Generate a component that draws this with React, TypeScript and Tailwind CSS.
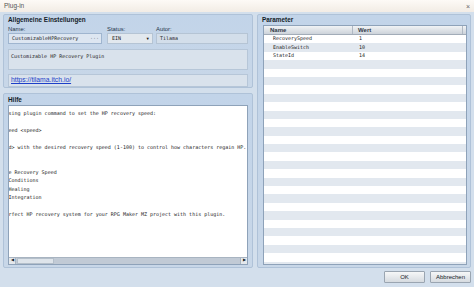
import React from 'react';

const helpLines = [
  'sing plugin command to set the HP recovery speed:',
  '',
  'eed <speed>',
  '',
  'd> with the desired recovery speed (1-100) to control how characters regain HP.',
  '',
  '',
  'e Recovery Speed',
  'Conditions',
  'Healing',
  'Integration',
  '',
  'rfect HP recovery system for your RPG Maker MZ project with this plugin.',
];

const params = [
  { name: 'RecoverySpeed', value: '1' },
  { name: 'EnableSwitch', value: '10' },
  { name: 'StateId', value: '14' },
];

export default function App() {
  const rows = Array.from({ length: 28 }, (_, i) => params[i] ?? { name: '', value: '' });

  return (
    <div className="w-[474px] h-[287px] overflow-hidden flex flex-col bg-[#d3dfec] text-[#141c28] font-['Liberation_Sans',sans-serif]">
      {/* Titelleiste */}
      <div className="h-[12px] flex items-center justify-between px-[4px] bg-gradient-to-b from-[#fdfaf6] to-[#f2ece5] text-[6.5px] text-[#555]">
        <span>Plug-in</span>
        <span className="text-[7px] text-[#666] leading-none">×</span>
      </div>

      <div className="h-[256px] flex gap-[4px] px-[3px] pt-[2px]">
        {/* linke Spalte */}
        <div className="w-[250px] flex flex-col gap-[5px]">
          <div className="h-[74px] flex flex-col px-[4px] rounded-[2px] border border-[#afc2d8] bg-gradient-to-b from-[#c2d4e9] to-[#c8d7e8]">
            <div className="h-[10px] flex items-center text-[6.4px] font-bold">Allgemeine Einstellungen</div>
            <div className="h-[8px] flex items-center text-[5.9px] text-[#26364d]">
              <span className="w-[99px]">Name:</span>
              <span className="w-[49px]">Status:</span>
              <span>Autor:</span>
            </div>
            <div className="h-[11px] flex font-['DejaVu_Sans_Mono',monospace] text-[5px] text-[#1c1c1c]">
              <div className="w-[94px] flex items-center justify-between pl-[3px] pr-[2px] border border-[#9fb5cf] bg-[#dde6f1]">
                <span>CustomizableHPRecovery</span>
                <span className="text-[#667]">···</span>
              </div>
              <div className="w-[46px] ml-[5px] flex items-center justify-between pl-[4px] pr-[3px] border border-[#b5c4d4] bg-[#e2e8ee]">
                <span>EIN</span>
                <span className="text-[4px]">▼</span>
              </div>
              <div className="flex-1 ml-[3px] flex items-center pl-[3px] border border-[#b5c4d4] bg-[#d3deea]">Tilama</div>
            </div>
            <div className="h-[21px] mt-[5px] pl-[2px] pt-[3px] border border-[#b6c6d8] bg-[#d9e2ec] font-['DejaVu_Sans_Mono',monospace] text-[5px] text-[#1c1c1c]">
              Customizable HP Recovery Plugin
            </div>
            <div className="h-[13px] mt-[4px] flex items-center pl-[2px] border border-[#b6c6d8] bg-[#d9e2ec]">
              <span className="text-[6.8px] text-[#1d3fc8] underline">https://tilama.itch.io/</span>
            </div>
          </div>

          <div className="flex-1 flex flex-col px-[4px] pb-[2px] rounded-[2px] border border-[#afc2d8] bg-gradient-to-b from-[#c2d4e9] to-[#c8d7e8]">
            <div className="h-[11px] flex items-center text-[6.4px] font-bold">Hilfe</div>
            <div className="flex-1 flex flex-col border border-[#8ea2b9] bg-white overflow-hidden">
              <div className="flex-1 overflow-hidden pt-[3px] pl-[1px] font-['DejaVu_Sans_Mono',monospace] text-[5px] leading-[8.4px] whitespace-pre text-[#1c1c1c]">
                {helpLines.map((l, i) => (
                  <div key={i} className="h-[8.4px] -ml-[1.5px]">{l}</div>
                ))}
              </div>
              {/* Scrollleiste */}
              <div className="h-[7px] flex items-stretch bg-[#c1cad5] border-t border-[#a8b4c1]">
                <div className="w-[7px] flex items-center justify-center bg-[#e4e8ec] border-r border-[#a8b4c1]">
                  <span className="text-[3.5px] leading-none">◀</span>
                </div>
                <div className="w-[37px] ml-[1px] bg-[#dee4ea] border border-[#b4bfca]"></div>
                <div className="flex-1"></div>
                <div className="w-[7px] flex items-center justify-center bg-[#e4e8ec] border-l border-[#a8b4c1]">
                  <span className="text-[3.5px] leading-none">▶</span>
                </div>
              </div>
            </div>
          </div>
        </div>

        {/* rechte Spalte */}
        <div className="flex-1 flex flex-col pl-[4px] pr-[3px] pb-[2px] rounded-[2px] border border-[#afc2d8] bg-gradient-to-b from-[#c2d4e9] to-[#c8d7e8]">
          <div className="h-[10px] flex items-center text-[6.4px] font-bold">Parameter</div>
          <div className="flex-1 flex flex-col ml-[1px] border border-[#8ea2b9] bg-white overflow-hidden">
            <div className="h-[9px] shrink-0 flex text-[6px] font-bold text-[#303a48] bg-gradient-to-b from-[#f1f3f5] to-[#cdd3da] border-b border-[#a2acb8]">
              <div className="w-[89px] flex items-center pl-[6px] border-r border-[#b0b9c4]">Name</div>
              <div className="w-[110px] flex items-center pl-[5px] border-r border-[#b0b9c4]">Wert</div>
              <div className="flex-1"></div>
            </div>
            {rows.map((r, i) => (
              <div
                key={i}
                className={`h-[8.4px] shrink-0 flex items-center font-['DejaVu_Sans_Mono',monospace] text-[5px] text-[#1c1c1c] ${i % 2 === 0 ? 'bg-white' : 'bg-[#e2e8ef]'}`}
              >
                <span className="w-[89px] pl-[9px]">{r.name}</span>
                <span className="pl-[6px]">{r.value}</span>
              </div>
            ))}
          </div>
        </div>
      </div>

      {/* Buttons */}
      <div className="flex-1 flex items-center justify-end gap-[5px] pr-[3px] pb-[1px]">
        <button className="w-[41px] h-[12px] text-[6px] rounded-[1px] border border-[#9aa5b1] bg-gradient-to-b from-[#f6f7f8] to-[#d6dbe0]">OK</button>
        <button className="w-[41px] h-[12px] text-[6px] rounded-[1px] border border-[#9aa5b1] bg-gradient-to-b from-[#f6f7f8] to-[#d6dbe0]">Abbrechen</button>
      </div>
    </div>
  );
}
